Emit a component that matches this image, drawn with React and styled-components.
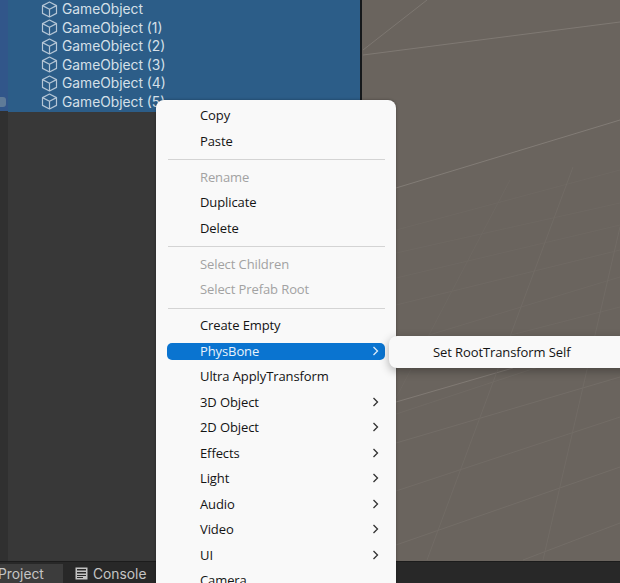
import React from "react";
import styled, { createGlobalStyle } from "styled-components";

const GlobalStyle = createGlobalStyle`
  html, body {
    margin: 0;
    padding: 0;
    background-color: #282828;
  }
`;

const Page = styled.div`
  position: relative;
  width: 620px;
  height: 583px;
  overflow: hidden;
  display: flex;
  flex-direction: column;
  font-family: Inter, "Liberation Sans", sans-serif;
`;

const Workspace = styled.div`
  display: flex;
  height: 561px;
  border-bottom: 1px solid #1c1c1c;
`;

const Hierarchy = styled.div`
  width: 360px;
  display: flex;
  background-color: #383838;
  border-right: 2px solid #15181b;
`;

const Gutter = styled.div`
  position: relative;
  width: 8px;
  background: linear-gradient(to bottom, #31568a 0, #31568a 111px, #303030 111px);
`;

const GutterMark = styled.div`
  position: absolute;
  left: 0;
  top: 97px;
  width: 6px;
  height: 10px;
  border-radius: 0 3px 3px 0;
  background-color: #5f7b98;
`;

const Tree = styled.div`
  flex: 1;
`;

const Selection = styled.div`
  height: 111.5px;
  background-color: #2c5d88;
`;

const TreeRow = styled.div`
  height: 18.6px;
  display: flex;
  align-items: center;
  gap: 4px;
  padding-left: 33px;
  font-size: 13.8px;
  color: #d6e0e8;
  position: relative;
  top: -0.3px;
  white-space: nowrap;
`;

const Scene = styled.div`
  flex: 1;
  background-color: #6a645e;
`;

const GridSvg = styled.svg`
  display: block;
  width: 100%;
  height: 100%;
`;

const TabBar = styled.div`
  flex: 1;
  display: flex;
  align-items: stretch;
  background-color: #282828;
`;

const Tab = styled.div`
  display: flex;
  align-items: center;
  gap: 5px;
  width: ${(p) => p.$width}px;
  margin-left: ${(p) => p.$offset || 0}px;
  margin-top: 2px;
  font-size: 13.8px;
  color: #c4c4c4;
  white-space: nowrap;
  background-color: ${(p) => (p.$active ? "#3c3c3c" : "transparent")};
  text-indent: ${(p) => (p.$active ? "-2px" : "0")};
`;

const Menu = styled.div`
  position: absolute;
  left: 156px;
  top: 100px;
  width: 240px;
  height: 520px;
  box-sizing: border-box;
  padding: 3.25px 11px 0;
  border-radius: 8px;
  background-color: #f9f9f9;
  box-shadow: 0 0 3px rgba(0, 0, 0, 0.35);
  font-family: "Open Sans", "Liberation Sans", sans-serif;
`;

const Item = styled.div`
  display: flex;
  align-items: center;
  justify-content: space-between;
  box-sizing: border-box;
  padding: 0 6px 1.5px 33px;
  font-size: 13px;
  letter-spacing: -0.1px;
  border-radius: 5px;
  white-space: nowrap;
  color: ${(p) => (p.$active ? "#e8f2fb" : p.$disabled ? "#a2a2a2" : "#141414")};
  background-color: ${(p) => (p.$active ? "#0a74d0" : "transparent")};
  height: ${(p) => (p.$active ? "17px" : "25.5px")};
  margin: ${(p) => (p.$active ? "4.25px 0" : "0")};
`;

const Separator = styled.div`
  height: 10.5px;
  display: flex;
  align-items: center;
  padding-left: 1px;

  &::after {
    content: "";
    flex: 1;
    height: 1px;
    background-color: #d4d4d4;
  }
`;

const SubMenu = styled.div`
  position: absolute;
  left: 389px;
  top: 336px;
  width: 260px;
  height: 32px;
  display: flex;
  align-items: center;
  box-sizing: border-box;
  padding: 0 0 1px 44px;
  border-radius: 8px;
  background-color: #f9f9f9;
  box-shadow: 0 3px 10px rgba(0, 0, 0, 0.3);
  font-family: "Open Sans", "Liberation Sans", sans-serif;
  font-size: 13px;
  letter-spacing: -0.1px;
  color: #141414;
  white-space: nowrap;
`;

function CubeIcon() {
  return (
    <svg width="17" height="17" viewBox="0 0 17 17" fill="none" stroke="#b5c6d6" strokeWidth="1.2" strokeLinejoin="round">
      <path d="M8.5 1 15.5 4.6 15.5 12.4 8.5 16 1.5 12.4 1.5 4.6Z" />
      <path d="M1.5 4.6 8.5 8.2 15.5 4.6M8.5 8.2 8.5 16" />
    </svg>
  );
}

function Chevron({ color }) {
  return (
    <svg width="7" height="10" viewBox="0 0 7 10" fill="none" stroke={color || "#333"} strokeWidth="1.3">
      <path d="M1.5 1 5.5 5 1.5 9" />
    </svg>
  );
}

function ConsoleIcon() {
  return (
    <svg width="13" height="13" viewBox="0 0 13 13">
      <path
        fill="#c4c4c4"
        fillRule="evenodd"
        d="M0.5 0.5H12.5V12.5H0.5ZM2 2V3.5H11V2ZM2 5V6.5H11V5ZM2 8V9H11V8ZM2 10V11H8V10Z"
      />
    </svg>
  );
}

// scene grid, [x1, y1, x2, y2, colour] with x relative to the scene view
const gridLines = [
  [1, 50, 65, 0, "#7d7771"],
  [1, 55, 258, 22, "#7f7973"],
  [1, 198, 258, 120, "#827c76"],
  [1, 425, 258, 340, "#706a64"],
  [34, 402, 151, 368, "#807a74"],
  [34, 443, 258, 377, "#736d67"],
  [34, 491, 258, 417, "#726c66"],
  [34, 545, 258, 467, "#736d67"],
  [161, 560, 258, 523, "#736d67"],
  [34, 230, 258, 170, "#6e6862"],
  [34, 253, 258, 203, "#6e6862"],
  [34, 278, 258, 225, "#6e6862"],
  [34, 305, 258, 250, "#6f6963"],
  [67, 335, 258, 277, "#6f6963"],
  [149, 335, 258, 307, "#6f6963"],
  [65, 560, 211, 167, "#716b65"],
  [181, 560, 258, 227, "#716b65"],
  [34, 398, 148, 180, "#6e6862"],
];

const objects = [
  "GameObject",
  "GameObject (1)",
  "GameObject (2)",
  "GameObject (3)",
  "GameObject (4)",
  "GameObject (5)",
];

const menuSections = [
  [{ label: "Copy" }, { label: "Paste" }],
  [{ label: "Rename", disabled: true }, { label: "Duplicate" }, { label: "Delete" }],
  [
    { label: "Select Children", disabled: true },
    { label: "Select Prefab Root", disabled: true },
  ],
  [
    { label: "Create Empty" },
    { label: "PhysBone", sub: true, active: true },
    { label: "Ultra ApplyTransform" },
    { label: "3D Object", sub: true },
    { label: "2D Object", sub: true },
    { label: "Effects", sub: true },
    { label: "Light", sub: true },
    { label: "Audio", sub: true },
    { label: "Video", sub: true },
    { label: "UI", sub: true },
    { label: "Camera" },
  ],
];

export default function App() {
  return (
    <Page>
      <GlobalStyle />
      <Workspace>
        <Hierarchy>
          <Gutter>
            <GutterMark />
          </Gutter>
          <Tree>
            <Selection>
              {objects.map((name) => (
                <TreeRow key={name}>
                  <CubeIcon />
                  {name}
                </TreeRow>
              ))}
            </Selection>
          </Tree>
        </Hierarchy>
        <Scene>
          <GridSvg viewBox="0 0 258 561" preserveAspectRatio="none">
            {gridLines.map(([x1, y1, x2, y2, color], i) => (
              <line key={i} x1={x1} y1={y1} x2={x2} y2={y2} stroke={color} strokeWidth="1" />
            ))}
          </GridSvg>
        </Scene>
      </Workspace>
      <TabBar>
        <Tab $active $width={63}>Project</Tab>
        <Tab $width={80} $offset={12}>
          <ConsoleIcon />
          Console
        </Tab>
      </TabBar>
      <Menu>
        {menuSections.map((section, i) => (
          <React.Fragment key={i}>
            {i > 0 && <Separator />}
            {section.map((item) => (
              <Item key={item.label} $active={item.active} $disabled={item.disabled}>
                {item.label}
                {item.sub && <Chevron color={item.active ? "#dcebf8" : "#333"} />}
              </Item>
            ))}
          </React.Fragment>
        ))}
      </Menu>
      <SubMenu>Set RootTransform Self</SubMenu>
    </Page>
  );
}
